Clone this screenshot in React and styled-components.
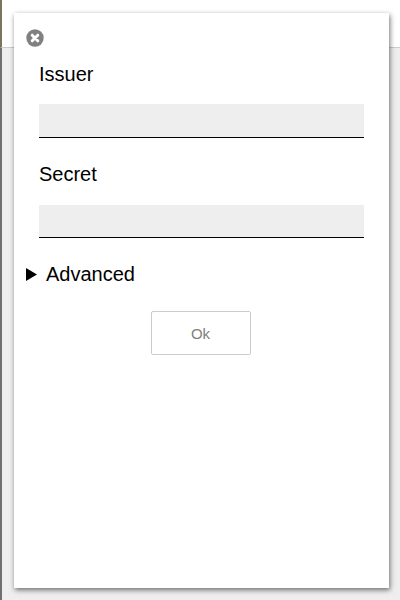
import React from 'react';
import styled, { createGlobalStyle } from 'styled-components';

const GlobalStyle = createGlobalStyle`
  html, body {
    margin: 0;
    height: 100%;
    overflow: hidden;
    font-family: "Liberation Sans", Arial, sans-serif;
  }
`;

const Page = styled.div`
  height: 600px;
  display: flex;
  flex-direction: column;
  background: #eeeeee;
`;

const TopBar = styled.div`
  height: 47px;
  flex: none;
  background: #fff;
  border-bottom: 1px solid #ccc;
  border-left: 2px solid #7c745f;
`;

const Content = styled.div`
  flex: 1;
  border-left: 2px solid #707070;
`;

const Modal = styled.div`
  position: absolute;
  top: 13px;
  left: 14px;
  width: 375px;
  height: 575px;
  box-sizing: border-box;
  padding: 16px 25px 0 12px;
  background: #fff;
  box-shadow: 1px 2px 5px rgba(0, 0, 0, 0.55);
`;

const CloseButton = styled.button`
  display: block;
  width: 18px;
  height: 18px;
  padding: 0;
  border: 0;
  background: none;
  cursor: pointer;
`;

const Form = styled.form`
  padding-left: 13px;
`;

const Label = styled.label`
  display: block;
  font-size: 20px;
  line-height: 23px;
  color: #000;
`;

const Field = styled.div`
  padding-top: 16px;
  & + & {
    padding-top: 25.7px;
  }
`;

const Input = styled.input`
  display: block;
  width: 100%;
  height: 33.5px;
  margin-top: 18.2px;
  padding: 0 8px;
  box-sizing: border-box;
  border: 0;
  border-bottom: 1px solid #000;
  border-radius: 0;
  background: #eee;
  outline: none;
  font-size: 16px;
`;

const Advanced = styled.details`
  margin-top: 25px;
  font-size: 20px;
  line-height: 23px;
  color: #000;
`;

const Summary = styled.summary`
  display: flex;
  align-items: center;
  gap: 9px;
  list-style: none;
  cursor: pointer;
`;

const Arrow = styled.svg`
  width: 11px;
  height: 13px;
  flex: none;
`;

const Actions = styled.div`
  display: flex;
  justify-content: center;
  margin-top: 25px;
  padding-left: 11px;
`;

const OkButton = styled.button`
  width: 100px;
  height: 44px;
  padding: 0;
  background: #fff;
  border: 1px solid #ccc;
  border-radius: 2px;
  color: #808080;
  font-family: inherit;
  font-size: 15px;
`;

export default function App() {
  return (
    <>
      <GlobalStyle />
      <Page>
        <TopBar />
        <Content />
      </Page>
      <Modal>
        <CloseButton aria-label="Close">
          <svg viewBox="0 0 18 18" width="18" height="18">
            <circle cx="9" cy="9" r="8.7" fill="#808080" />
            <path d="M6.2 6.2l5.6 5.6M11.8 6.2l-5.6 5.6" stroke="#fff" strokeWidth="3" strokeLinecap="round" />
          </svg>
        </CloseButton>
        <Form>
          <Field>
            <Label>Issuer</Label>
            <Input />
          </Field>
          <Field>
            <Label>Secret</Label>
            <Input />
          </Field>
        </Form>
        <Advanced>
          <Summary>
            <Arrow viewBox="0 0 11 13">
              <path d="M0 0L11 6.5L0 13Z" fill="#000" />
            </Arrow>
            Advanced
          </Summary>
        </Advanced>
        <Actions>
          <OkButton>Ok</OkButton>
        </Actions>
      </Modal>
    </>
  );
}
